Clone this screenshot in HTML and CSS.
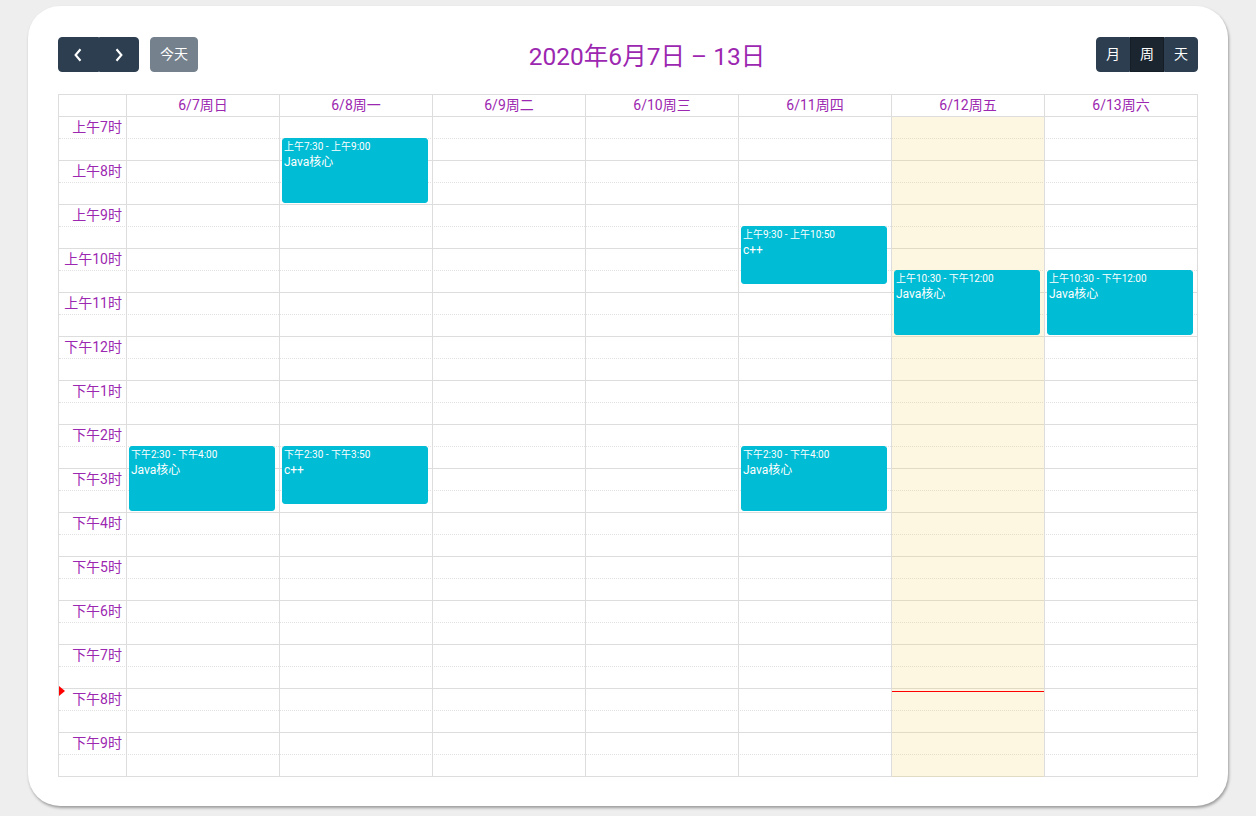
FILE: index.html
```html
<!DOCTYPE html>
<html lang="zh-CN">
<head>
    <meta charset="UTF-8">
    <meta name="viewport" content="width=device-width, initial-scale=1.0">
    <title>课程表</title>
    <link rel="stylesheet" href="styles.css">
</head>
<body>
    <div class="card">
        <div class="toolbar">
            <div class="toolbar-chunk">
                <div class="btn-group">
                    <button class="btn btn-icon" title="上一周">
                        <svg width="8" height="14" viewBox="0 0 8 14"><polyline points="6.5,1.2 1.6,7 6.5,12.8" fill="none" stroke="#fff" stroke-width="2.1"/></svg>
                    </button>
                    <button class="btn btn-icon" title="下一周">
                        <svg width="8" height="14" viewBox="0 0 8 14"><polyline points="1.5,1.2 6.4,7 1.5,12.8" fill="none" stroke="#fff" stroke-width="2.1"/></svg>
                    </button>
                </div>
                <button class="btn btn-today" disabled>今天</button>
            </div>
            <h2 class="title">2020年6月7日 – 13日</h2>
            <div class="btn-group">
                <button class="btn">月</button>
                <button class="btn active">周</button>
                <button class="btn">天</button>
            </div>
        </div>

        <div class="cal">
            <div class="cal-head">
                <div class="head-axis"></div>
                <div class="day-head">6/7周日</div>
                <div class="day-head">6/8周一</div>
                <div class="day-head">6/9周二</div>
                <div class="day-head">6/10周三</div>
                <div class="day-head">6/11周四</div>
                <div class="day-head">6/12周五</div>
                <div class="day-head">6/13周六</div>
            </div>

            <div class="cal-body">
                <div class="slots">
                    <div class="slot half"><span class="slot-label">上午7时</span></div>
                    <div class="slot"></div>
                    <div class="slot half"><span class="slot-label">上午8时</span></div>
                    <div class="slot"></div>
                    <div class="slot half"><span class="slot-label">上午9时</span></div>
                    <div class="slot"></div>
                    <div class="slot half"><span class="slot-label">上午10时</span></div>
                    <div class="slot"></div>
                    <div class="slot half"><span class="slot-label">上午11时</span></div>
                    <div class="slot"></div>
                    <div class="slot half"><span class="slot-label">下午12时</span></div>
                    <div class="slot"></div>
                    <div class="slot half"><span class="slot-label">下午1时</span></div>
                    <div class="slot"></div>
                    <div class="slot half"><span class="slot-label">下午2时</span></div>
                    <div class="slot"></div>
                    <div class="slot half"><span class="slot-label">下午3时</span></div>
                    <div class="slot"></div>
                    <div class="slot half"><span class="slot-label">下午4时</span></div>
                    <div class="slot"></div>
                    <div class="slot half"><span class="slot-label">下午5时</span></div>
                    <div class="slot"></div>
                    <div class="slot half"><span class="slot-label">下午6时</span></div>
                    <div class="slot"></div>
                    <div class="slot half"><span class="slot-label">下午7时</span></div>
                    <div class="slot"></div>
                    <div class="slot half"><span class="slot-label">下午8时</span></div>
                    <div class="slot"></div>
                    <div class="slot half"><span class="slot-label">下午9时</span></div>
                    <div class="slot"></div>
                </div>

                <div class="day-col" style="grid-column: 2">
                    <div class="event" style="top: 329px; height: 65px">
                        <div class="event-time">下午2:30 - 下午4:00</div>
                        <div class="event-title">Java核心</div>
                    </div>
                </div>
                <div class="day-col" style="grid-column: 3">
                    <div class="event" style="top: 21px; height: 65px">
                        <div class="event-time">上午7:30 - 上午9:00</div>
                        <div class="event-title">Java核心</div>
                    </div>
                    <div class="event" style="top: 329px; height: 58px">
                        <div class="event-time">下午2:30 - 下午3:50</div>
                        <div class="event-title">c++</div>
                    </div>
                </div>
                <div class="day-col" style="grid-column: 4"></div>
                <div class="day-col" style="grid-column: 5"></div>
                <div class="day-col" style="grid-column: 6">
                    <div class="event" style="top: 109px; height: 58px">
                        <div class="event-time">上午9:30 - 上午10:50</div>
                        <div class="event-title">c++</div>
                    </div>
                    <div class="event" style="top: 329px; height: 65px">
                        <div class="event-time">下午2:30 - 下午4:00</div>
                        <div class="event-title">Java核心</div>
                    </div>
                </div>
                <div class="day-col today" style="grid-column: 7">
                    <div class="event" style="top: 153px; height: 65px">
                        <div class="event-time">上午10:30 - 下午12:00</div>
                        <div class="event-title">Java核心</div>
                    </div>
                    <div class="now-line" style="top: 574px"></div>
                </div>
                <div class="day-col" style="grid-column: 8">
                    <div class="event" style="top: 153px; height: 65px">
                        <div class="event-time">上午10:30 - 下午12:00</div>
                        <div class="event-title">Java核心</div>
                    </div>
                </div>

                <div class="now-arrow" style="top: 569px"></div>
            </div>
        </div>
    </div>
</body>
</html>
```

FILE: styles.css
```css
body {
    margin: 0;
    padding: 6px 0 10px;
    background-color: #eee;
    font-family: Roboto, "Noto Sans CJK SC", sans-serif;
    font-size: 14px;
}

.card {
    width: 1200px;
    box-sizing: border-box;
    margin: 0 auto;
    padding: 31px 30px 29px;
    background-color: #fff;
    border-radius: 32px;
    box-shadow: 1px 2px 3px rgba(0, 0, 0, 0.35);
}

/* toolbar */

.toolbar {
    display: flex;
    justify-content: space-between;
    align-items: center;
    margin-bottom: 22px;
}

.toolbar-chunk {
    display: flex;
    align-items: center;
}

.title {
    margin: 0;
    font-size: 24.5px;
    font-weight: 400;
    color: #9c27b0;
}

.btn-group {
    display: flex;
}

.btn {
    height: 35px;
    padding: 0 9px;
    border: 1px solid #2c3e50;
    border-radius: 4px;
    background-color: #2c3e50;
    color: #fff;
    font-family: inherit;
    font-size: 14px;
    line-height: 21px;
    cursor: pointer;
}

.btn-group .btn {
    border-radius: 0;
}

.btn-group .btn:first-child {
    border-radius: 4px 0 0 4px;
}

.btn-group .btn:last-child {
    border-radius: 0 4px 4px 0;
}

.btn.active {
    background-color: #1a252f;
    border-color: #151e27;
}

.btn-icon {
    width: 40.5px;
    display: flex;
    align-items: center;
    justify-content: center;
}

.btn-today {
    margin-left: 11px;
    opacity: 0.65;
    cursor: default;
}

/* calendar grid */

.cal {
    border: 1px solid #ddd;
    border-bottom: none;
}

.cal-head,
.cal-body {
    display: grid;
    grid-template-columns: 67px repeat(7, 1fr);
}

.cal-head {
    border-bottom: 1px solid #ddd;
}

.day-head {
    height: 21px;
    line-height: 21px;
    border-left: 1px solid #ddd;
    text-align: center;
    color: #9c27b0;
}

.cal-body {
    position: relative;
}

.slots {
    grid-row: 1;
    grid-column: 1 / -1;
}

.slot {
    height: 22px;
    box-sizing: border-box;
    border-bottom: 1px solid #ddd;
}

.slot.half {
    border-bottom: 1px dotted #e2e2e2;
}

.slot-label {
    display: block;
    width: 67px;
    box-sizing: border-box;
    padding-right: 4px;
    text-align: right;
    line-height: 21px;
    color: #9c27b0;
}

.day-col {
    grid-row: 1;
    position: relative;
    border-left: 1px solid #ddd;
}

.day-col.today {
    background-color: rgba(245, 215, 110, 0.2);
}

.event {
    position: absolute;
    left: 2px;
    right: 2.5%;
    box-sizing: border-box;
    padding: 1px 1px 0;
    border: 1px solid #00bcd4;
    border-radius: 3px;
    background-color: #00bcd4;
    color: #fff;
    overflow: hidden;
}

.event-time {
    font-size: 10px;
    line-height: 13px;
    margin-bottom: 1px;
    white-space: nowrap;
}

.event-title {
    font-size: 12px;
    line-height: 16px;
}

.now-line {
    position: absolute;
    left: 0;
    right: 0;
    border-top: 1px solid red;
}

.now-arrow {
    position: absolute;
    left: 0;
    width: 0;
    height: 0;
    border-style: solid;
    border-color: transparent transparent transparent red;
    border-width: 5px 0 5px 6px;
}
```
